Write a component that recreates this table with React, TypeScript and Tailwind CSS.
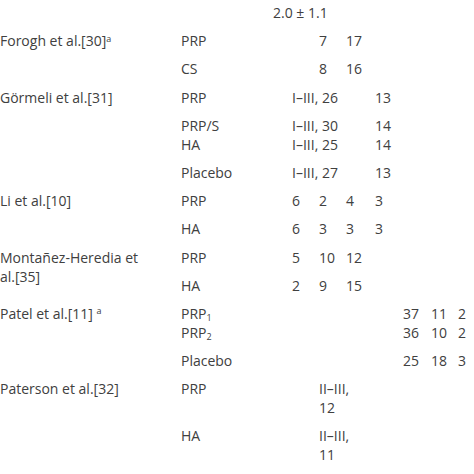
import React from "react";

export default function App() {
  return (
    <div className="w-[474px] h-[474px] overflow-hidden bg-white">
      <div className="grid grid-cols-[181px_111px_27px_27px_29px_28px_28px_27px_1fr] gap-y-[9.2px] pt-[3px] font-['Open_Sans',sans-serif] text-[14px] leading-[19px] text-[#404040] whitespace-nowrap">
        {/* row 1 */}
        <div className="row-start-1 col-start-2 col-span-4 pl-[92px]">2.0 ± 1.1</div>

        {/* Forogh */}
        <div className="row-start-2 col-start-1">
          Forogh et al.[30]<sup className="text-[9px]">a</sup>
        </div>
        <div className="row-start-2 col-start-2">PRP</div>
        <div className="row-start-2 col-start-4">7</div>
        <div className="row-start-2 col-start-5">17</div>

        <div className="row-start-3 col-start-2">CS</div>
        <div className="row-start-3 col-start-4">8</div>
        <div className="row-start-3 col-start-5">16</div>

        {/* Görmeli */}
        <div className="row-start-4 col-start-1">Görmeli et al.[31]</div>
        <div className="row-start-4 col-start-2">PRP</div>
        <div className="row-start-4 col-start-3 col-span-3">I–III, 26</div>
        <div className="row-start-4 col-start-6">13</div>

        <div className="row-start-5 col-start-2">
          PRP/S
          <br />
          HA
        </div>
        <div className="row-start-5 col-start-3 col-span-3">
          I–III, 30
          <br />
          I–III, 25
        </div>
        <div className="row-start-5 col-start-6">
          14
          <br />
          14
        </div>

        <div className="row-start-6 col-start-2">Placebo</div>
        <div className="row-start-6 col-start-3 col-span-3">I–III, 27</div>
        <div className="row-start-6 col-start-6">13</div>

        {/* Li */}
        <div className="row-start-7 col-start-1">Li et al.[10]</div>
        <div className="row-start-7 col-start-2">PRP</div>
        <div className="row-start-7 col-start-3">6</div>
        <div className="row-start-7 col-start-4">2</div>
        <div className="row-start-7 col-start-5">4</div>
        <div className="row-start-7 col-start-6">3</div>

        <div className="row-start-8 col-start-2">HA</div>
        <div className="row-start-8 col-start-3">6</div>
        <div className="row-start-8 col-start-4">3</div>
        <div className="row-start-8 col-start-5">3</div>
        <div className="row-start-8 col-start-6">3</div>

        {/* Montañez-Heredia */}
        <div className="row-start-9 row-span-2 col-start-1">
          Montañez-Heredia et
          <br />
          al.[35]
        </div>
        <div className="row-start-9 col-start-2">PRP</div>
        <div className="row-start-9 col-start-3">5</div>
        <div className="row-start-9 col-start-4">10</div>
        <div className="row-start-9 col-start-5">12</div>

        <div className="row-start-10 col-start-2">HA</div>
        <div className="row-start-10 col-start-3">2</div>
        <div className="row-start-10 col-start-4">9</div>
        <div className="row-start-10 col-start-5">15</div>

        {/* Patel */}
        <div className="row-start-11 col-start-1">
          Patel et al.[11] <sup className="text-[9px]">a</sup>
        </div>
        <div className="row-start-11 col-start-2">
          PRP<sub className="text-[9px]">1</sub>
          <br />
          PRP<sub className="text-[9px]">2</sub>
        </div>
        <div className="row-start-11 col-start-7">
          37
          <br />
          36
        </div>
        <div className="row-start-11 col-start-8">
          11
          <br />
          10
        </div>
        <div className="row-start-11 col-start-9">
          2
          <br />
          2
        </div>

        <div className="row-start-12 col-start-2">Placebo</div>
        <div className="row-start-12 col-start-7">25</div>
        <div className="row-start-12 col-start-8">18</div>
        <div className="row-start-12 col-start-9">3</div>

        {/* Paterson */}
        <div className="row-start-13 col-start-1">Paterson et al.[32]</div>
        <div className="row-start-13 col-start-2">PRP</div>
        <div className="row-start-13 col-start-4">
          II–III,
          <br />
          12
        </div>

        <div className="row-start-14 col-start-2">HA</div>
        <div className="row-start-14 col-start-4">
          II–III,
          <br />
          11
        </div>
      </div>
    </div>
  );
}
